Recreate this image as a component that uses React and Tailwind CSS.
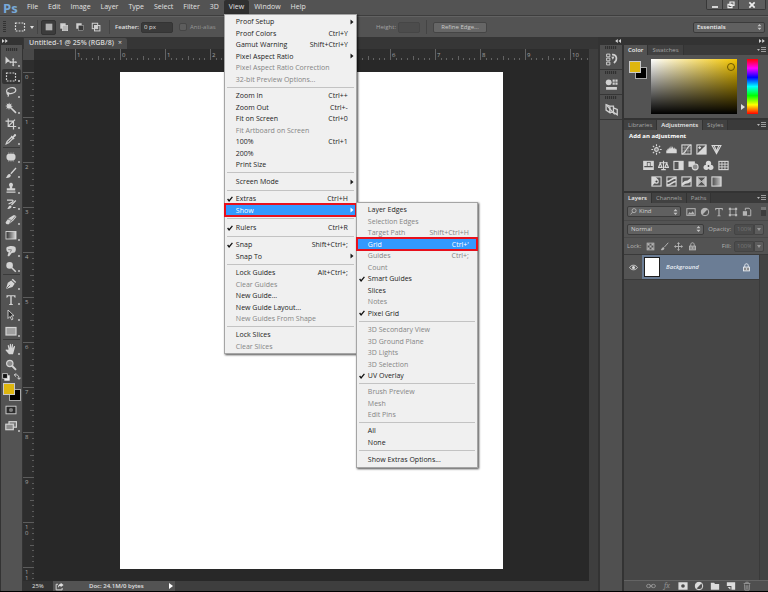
import React from "react";

/* ---------- drawing helpers ---------- */

function Icon({ size = 12, className = "", children }) {
  return (
    <svg
      width={size}
      height={size}
      viewBox="0 0 12 12"
      fill="none"
      stroke="currentColor"
      strokeWidth="1.2"
      aria-hidden="true"
      className={`shrink-0 ${className}`}
    >
      {children}
    </svg>
  );
}

const F = { fill: "currentColor", stroke: "none" };

const icons = {
  move: (
    <>
      <path {...F} d="M0.5 1.5v7.5l2-2 3-0.6z" />
      <path d="M8.2 4v6.4M5 7.2h6.4" />
      <path {...F} d="M8.2 3l1.3 1.6H6.9zM8.2 11.4l1.3-1.6H6.9zM4.2 7.2l1.4-1.2v2.4zM12 7.2l-1.4-1.2v2.4z" />
    </>
  ),
  marquee: <rect x="1.5" y="2" width="9" height="8" strokeDasharray="1.8 1.2" />,
  lasso: (
    <>
      <ellipse cx="6.2" cy="4.6" rx="4.6" ry="2.9" transform="rotate(-12 6.2 4.6)" />
      <path d="M2.6 6.6c-1 .8-.2 2 .8 1.600c1-.4.600-1.400-.200-1.500M3.200 8.400c.4.8.2 1.700-.4 2.300" />
    </>
  ),
  wand: (
    <>
      <path d="M5.500 5.500l5.500 5.300" strokeWidth="1.700" />
      <path {...F} d="M4.200 0.400l.6 2 1.900-.9-.8 1.900 2 .8-2 .7.7 1.900-1.800-.8-.8 1.900-.7-2-2 .8.900-1.900-1.900-.8 2-.700-.8-1.900 1.900.900z" />
    </>
  ),
  crop: <path d="M3.200 0.500v8h8M0.500 3.200h8v8.300M3.500 8.200l6.500-6.500" strokeWidth="1.200" />,
  dropper: (
    <>
      <path d="M1.200 10.800l1-2.400 4.300-4.200 1.400 1.400-4.300 4.200z" />
      <path {...F} d="M5.800 3.600l1-1 .9.800 1.500-2c1.100-1.100 2.700.5 1.600 1.600l-2 1.500.8.9-1 1z" />
    </>
  ),
  patch: (
    <>
      <rect {...F} x="1.500" y="2.800" width="9" height="6.600" rx="2.800" />
      <path d="M3.500 1.300v9.500M5.200 1.300v9.500M6.900 1.300v9.500M8.600 1.300v9.500" strokeWidth=".6" opacity=".6" />
    </>
  ),
  brush: (
    <>
      <path d="M11 1L5.800 6.800" strokeWidth="1.300" />
      <path {...F} d="M0.600 10.800c1.500-.2 1.400-3.300 3.600-3.700 1.300-.1 2 1.100 1.400 2.200-.8 1.500-3.200 1.900-5 1.500z" />
    </>
  ),
  stamp: <path {...F} d="M6 .8a2 2 0 0 1 1.600 3.200c-.5.800-.5 1.500-.4 2.300h3v2.300H1.800V6.300h3c.1-.8.1-1.500-.4-2.300A2 2 0 0 1 6 .8zM1.500 9.600h9v1.100h-9z" />,
  history: (
    <>
      <path d="M10.800 2.500L6.500 7" strokeWidth="1.200" />
      <path {...F} d="M2 10.800c1.300-.2 1.200-2.600 3-3.200 1.300-.1 2 1 1.300 2-.8 1.200-2.700 1.500-4.300 1.200z" />
      <path d="M2 2.200h5.200c1.400 0 .8 1.700-.3 2.200L3.500 6M8 9.500h2.500" />
    </>
  ),
  eraser: (
    <>
      <path {...F} d="M5.200 3.200L8 1.500c1-.5 3.700.2 3.300 1.500L8.600 6.200 4.600 9.800C3 11 .2 10 .7 8.300L3 5z" />
      <path d="M3 5.200l3.400 1.200 1-.5 3-3.700M6.400 6.400L4.300 9.800" stroke="#666" strokeWidth=".7" />
    </>
  ),
  gradient: (
    <>
      <defs>
        <linearGradient id="toolGradient">
          <stop offset="0" stopColor="#2c2c2c" />
          <stop offset="1" stopColor="#dcdcdc" />
        </linearGradient>
      </defs>
      <rect x="1" y="2.500" width="10" height="7.500" fill="url(#toolGradient)" strokeWidth=".9" />
    </>
  ),
  smudge: (
    <>
      <path {...F} d="M1.500 2.500C3.500.8 8 .5 10.300 2c1 2 .5 4.500-.8 5.600L6.800 8l-2.600 3.200c-1 .4-1.800-.2-1.500-1.200l1-2.800C1.800 7 1 5 1.500 2.500z" />
      <path d="M3.200 4.600l3.300.2-1.200 2.600" stroke="#666" strokeWidth=".7" />
    </>
  ),
  dodge: (
    <>
      <circle {...F} cx="4.600" cy="4.400" r="3.300" />
      <path d="M6.800 6.800l4 4" strokeWidth="1.500" />
    </>
  ),
  pen: (
    <>
      <path {...F} d="M7.800 .8l3.400 3.200-1 1-3.500-3.200zM6.200 2.400l3.500 3.300-2.300 3.400L1 11l1.800-6.300z" />
      <path d="M1.500 10.500l3.600-3.600" stroke="#535353" strokeWidth=".8" />
    </>
  ),
  type: <path {...F} d="M1.500 1.200h9v2.600h-.8c-.2-1-.7-1.500-1.600-1.500H6.700v6.900c0 .8.300 1 1.300 1v.8H4v-.8c1 0 1.300-.2 1.300-1V2.300H3.900c-.9 0-1.400.5-1.600 1.500h-.8z" />,
  select: <path d="M3 1v8.500l2-2 1.600 3.300 1.400-.7-1.600-3.200 2.600-.2z" fill="#2d2d2d" strokeWidth=".9" />,
  shape: <rect x="1" y="2.500" width="10" height="7.500" fill="#a0a0a0" />,
  hand: <path {...F} d="M3.600 6.500L2.700 2.800c0-.9.900-1 1.200-.2l.9 2.700V1.500c.1-.9 1.100-.9 1.200 0l.2 3.600.7-3.500c.3-.8 1.200-.6 1.100.2l-.3 3.700 1.200-2.200c.6-.7 1.400-.2 1.100.6L8.800 8.400 8 11.300H4L.7 7.600c-.4-.8.4-1.400 1.200-.9z" />,
  zoom: (
    <>
      <circle cx="4.800" cy="4.500" r="3.200" fill="#8c8c8c" strokeWidth="1.200" />
      <path d="M7.200 7l3.800 3.900" strokeWidth="1.900" />
    </>
  ),
  quickMask: (
    <>
      <rect x="1" y="2.200" width="10" height="7.600" fill="#2b2b2b" strokeWidth=".9" />
      <circle cx="6" cy="6" r="2.100" fill="#808080" stroke="none" />
    </>
  ),
  screenMode: (
    <>
      <rect x="4" y="1.700" width="7.500" height="5.500" fill="#777" />
      <rect x=".8" y="4.200" width="7.500" height="5.500" fill="#8d8d8d" />
    </>
  ),
  selNew: <rect {...F} x="2" y="2" width="8" height="8" opacity=".8" />,
  selAdd: (
    <>
      <rect {...F} x="1.500" y="1.500" width="6.500" height="6.500" />
      <rect x="4" y="4" width="6.500" height="6.500" fill="#b5b5b5" stroke="#e0e0e0" strokeWidth=".6" />
    </>
  ),
  selSub: (
    <>
      <path {...F} d="M1.500 1.500H8V4H4v4H1.500z" />
      <rect x="4.300" y="4.300" width="6.200" height="6.200" fill="#3a3a3a" strokeWidth=".5" />
    </>
  ),
  selInt: (
    <>
      <rect x="1.500" y="1.500" width="6.500" height="6.500" />
      <rect x="4.200" y="4.200" width="6.500" height="6.500" />
      <rect {...F} x="4.500" y="4.500" width="3.500" height="3.500" />
    </>
  ),
  histPanel: (
    <>
      <path d="M1.500 1h3v2.500h-3zM1.500 4.700h3v2.500h-3zM1.500 8.400h3V11h-3z" strokeWidth=".9" />
      <path d="M6.500 1.500c4.500-.5 5.500 5 1.700 7.700" strokeWidth="1.500" />
      <path {...F} d="M5.800 3.500l3-.3-1.600 3z" />
    </>
  ),
  props: (
    <>
      <circle {...F} cx="3.400" cy="4" r="2.700" />
      <path {...F} d="M7 1.400h2v2H7zM9.600 1.400h2v2h-2zM7 4.200h2v2H7zM9.600 4.200h2v2h-2zM1 8.300h10v2.500H1z" />
    </>
  ),
  brushes: (
    <>
      <path d="M1 1.500l3.500 1.400v6L1 6.500zM4.500 2.900h3.300v5.800H4.500M7.800 4.500l3.500 1.400v5L7.800 8.700z" />
      <path d="M2 2.500l7 8" />
    </>
  ),
  sun: (
    <>
      <circle cx="6" cy="6" r="2" fill="#7c7c7c" />
      <path d="M6 .4v2M6 9.600v2M.4 6h2M9.600 6h2M2 2l1.500 1.500M8.500 8.500L10 10M10 2L8.500 3.500M3.500 8.500L2 10" />
    </>
  ),
  levels: <path {...F} d="M.3 10V6.500l1 1V5l1 1.500V4l1 2V3l1.100 2.500L5.500 2l.8 3L7.400 2.500l.8 3L9.200 3.500l.6 2.500 1-1.500.9 2V10z" />,
  curves: (
    <>
      <rect x="1" y="1" width="10" height="10" />
      <path d="M1 4.300h10M1 7.600h10M4.300 1v10M7.600 1v10" strokeWidth=".4" />
      <path d="M1 11C6 10 6 2 11 1" />
    </>
  ),
  exposure: (
    <>
      <rect x="1" y="1" width="10" height="10" />
      <path {...F} d="M1 11L11 1v10z" />
      <path d="M2.500 4h3M4 2.500v3" />
    </>
  ),
  vibrance: <path d="M1.200 1.700h9.600L6 10.500zM3.500 2l2.500 6 2.500-6" />,
  hueSat: (
    <>
      <rect x=".8" y="1.500" width="10.400" height="8.800" />
      <path {...F} d="M1 1.500h3.200v5H1zM5 3h2.500v3.500H5zM8.300 1.500H11v5H8.300zM1 8h10v2.300H1z" />
    </>
  ),
  balance: (
    <>
      <path d="M6 .8v9M1.500 3L10.500 3M3.500 10.500h5" />
      <path d="M.6 8L2.500 3.500 4.400 8zM7.600 8l1.900-4.500L11.400 8z" />
    </>
  ),
  bw: (
    <>
      <rect x="1" y="1.500" width="10" height="9" />
      <path {...F} d="M6 1.500h5v9H6z" />
    </>
  ),
  photoFilter: (
    <>
      <path {...F} d="M.5 1.500h7v6h-7z" />
      <circle cx="7.800" cy="7.600" r="3.200" fill="#8d8d8d" />
    </>
  ),
  mixer: (
    <>
      <circle {...F} cx="6" cy="3.800" r="2.900" />
      <circle {...F} cx="3.500" cy="8" r="2.900" />
      <circle {...F} cx="8.500" cy="8" r="2.900" />
      <circle cx="6" cy="6.500" r="1" fill="#444" stroke="none" />
    </>
  ),
  lookup: (
    <>
      <rect x="1" y="1.500" width="10" height="9" />
      <path d="M1 4.500h10M1 7.500h10M4.300 1.500v9M7.600 1.500v9" strokeWidth="1" />
    </>
  ),
  invert: (
    <>
      <rect x="1" y="1" width="10" height="10" />
      <path {...F} d="M1 11V1h4L8 4v4H4z" />
      <circle cx="6" cy="6" r="1.800" fill="#3e3e3e" />
    </>
  ),
  posterize: (
    <>
      <rect x="1" y="1" width="10" height="10" />
      <path d="M1 6C5 6 6 2 11 2M1 10C6 10 6 6 11 6" strokeWidth="1.800" />
    </>
  ),
  threshold: (
    <>
      <rect x="1" y="1" width="10" height="10" />
      <path {...F} d="M1 8l3-2.500L7 5l4-3v4L8 8l-3 .5L1 11z" />
    </>
  ),
  selective: (
    <>
      <rect x="1" y="1" width="10" height="10" />
      <path {...F} d="M1 1l4.500 5L1 11zM11 1L6.500 6 11 11z" opacity=".8" />
      <path d="M1 1l10 10M11 1L1 11" strokeWidth=".6" />
    </>
  ),
  gradMap: (
    <>
      <defs>
        <linearGradient id="mapGradient">
          <stop offset="0" stopColor="#4a4a4a" />
          <stop offset="1" stopColor="#c8c8c8" />
        </linearGradient>
      </defs>
      <rect x="1" y="1" width="10" height="10" fill="url(#mapGradient)" />
    </>
  ),
  image: (
    <>
      <rect x="1" y="2" width="10" height="8" />
      <path {...F} d="M2 9l2.500-3L6 7.500 8 5l2.500 4z" />
    </>
  ),
  halfCircle: (
    <>
      <circle cx="6" cy="6" r="4.500" />
      <path {...F} d="M9.200 2.800A4.500 4.500 0 1 0 2.800 9.200z" />
    </>
  ),
  frame: (
    <>
      <rect x="2.500" y="2.500" width="7" height="7" />
      <path {...F} d="M1 1h2.600v2.600H1zM8.400 1H11v2.600H8.400zM1 8.400h2.600V11H1zM8.400 8.400H11V11H8.400z" />
    </>
  ),
  smart: (
    <>
      <path d="M4 4V1.500h4.500l2 2v7H6.500" />
      <rect {...F} x="1" y="5" width="5" height="5.500" />
    </>
  ),
  checker: (
    <>
      <rect x="1.500" y="1.500" width="9" height="9" />
      <path {...F} d="M2 2h2.700v2.700H2zM7.300 2H10v2.700H7.300zM4.700 4.700h2.600v2.600H4.700zM2 7.300h2.700V10H2zM7.300 7.300H10V10H7.300z" />
    </>
  ),
  moveAll: (
    <>
      <path d="M6 2v8M2 6h8" />
      <path {...F} d="M6 0l2 2.500H4zM6 12l2-2.500H4zM0 6l2.500-2v4zM12 6L9.500 4v4z" />
    </>
  ),
  lock: (
    <>
      <rect x="2" y="5.500" width="8" height="5" fill="#8d8d8d" />
      <path d="M3.700 5.500V3.300c0-3 4.600-3 4.600 0v2.200" strokeWidth="1.300" />
      <path d="M6 7v2" />
    </>
  ),
  eye: (
    <>
      <path d="M.8 6C3 2 9 2 11.200 6 9 10 3 10 .8 6z" strokeWidth="1.200" />
      <circle {...F} cx="6" cy="6" r="2" />
    </>
  ),
  link: (
    <>
      <ellipse cx="3.200" cy="6" rx="2.500" ry="2" />
      <ellipse cx="8.800" cy="6" rx="2.500" ry="2" />
      <path d="M4 6h4" />
    </>
  ),
  mask: (
    <>
      <rect {...F} x=".5" y="1.500" width="11" height="9" />
      <circle cx="6" cy="6" r="2.200" fill="#4a4a4a" stroke="none" />
    </>
  ),
  folder: <path {...F} d="M1 2h4l1 1.500h5V10.500H1z" />,
  newLayer: (
    <>
      <path {...F} d="M1 1.500h10v9H6.500V6H1z" />
      <path {...F} d="M2 7.200h3.300v3.300z" />
    </>
  ),
  trash: <path d="M2 3h8M4.500 3V1.500h3V3M3 4l.4 7h5.200L9 4M5 5v5M7 5v5" />,
  share: (
    <>
      <path d="M4 3H1.500v7.500h8V8" />
      <path {...F} d="M7.500 1l4 3-4 3V5.200C5.500 5.200 4.500 6 4 8c-.3-3 1-5 3.500-5.200z" />
    </>
  ),
};

function Grip() {
  return (
    <span className="block h-[3px] w-3 bg-[repeating-linear-gradient(90deg,#303030_0_1px,#4a4a4a_1px_2px)]" />
  );
}

/* ---------- menus ---------- */

const viewMenu = [
  [
    ["Proof Setup", { sub: true }],
    ["Proof Colors", { keys: "Ctrl+Y" }],
    ["Gamut Warning", { keys: "Shift+Ctrl+Y" }],
    ["Pixel Aspect Ratio", { sub: true }],
    ["Pixel Aspect Ratio Correction", { off: true }],
    ["32-bit Preview Options...", { off: true }],
  ],
  [
    ["Zoom In", { keys: "Ctrl++" }],
    ["Zoom Out", { keys: "Ctrl+-" }],
    ["Fit on Screen", { keys: "Ctrl+0" }],
    ["Fit Artboard on Screen", { off: true }],
    ["100%", { keys: "Ctrl+1" }],
    ["200%", {}],
    ["Print Size", {}],
  ],
  [["Screen Mode", { sub: true }]],
  [
    ["Extras", { keys: "Ctrl+H", checked: true }],
    ["Show", { sub: true, active: true, open: true }],
  ],
  [["Rulers", { keys: "Ctrl+R", checked: true }]],
  [
    ["Snap", { keys: "Shift+Ctrl+;", checked: true }],
    ["Snap To", { sub: true }],
  ],
  [
    ["Lock Guides", { keys: "Alt+Ctrl+;" }],
    ["Clear Guides", { off: true }],
    ["New Guide...", {}],
    ["New Guide Layout...", {}],
    ["New Guides From Shape", { off: true }],
  ],
  [
    ["Lock Slices", {}],
    ["Clear Slices", { off: true }],
  ],
];

const showMenu = [
  [
    ["Layer Edges", {}],
    ["Selection Edges", { off: true }],
    ["Target Path", { keys: "Shift+Ctrl+H", off: true }],
    ["Grid", { keys: "Ctrl+'", active: true }],
    ["Guides", { keys: "Ctrl+;", off: true }],
    ["Count", { off: true }],
    ["Smart Guides", { checked: true }],
    ["Slices", {}],
    ["Notes", { off: true }],
    ["Pixel Grid", { checked: true }],
  ],
  [
    ["3D Secondary View", { off: true }],
    ["3D Ground Plane", { off: true }],
    ["3D Lights", { off: true }],
    ["3D Selection", { off: true }],
    ["UV Overlay", { checked: true }],
  ],
  [
    ["Brush Preview", { off: true }],
    ["Mesh", { off: true }],
    ["Edit Pins", { off: true }],
  ],
  [
    ["All", {}],
    ["None", {}],
  ],
  [["Show Extras Options...", {}]],
];

function MenuItem({ label, opts }) {
  const { keys, sub, off, checked, active, open } = opts;
  const tone = active
    ? "bg-[#3399ff] text-white outline-2 -outline-offset-1 outline-[#e8101c]"
    : off
      ? "text-[#858585]"
      : "text-[#1c1c1c]";
  return (
    <li className="relative h-[13px] not-only:odd:h-[11px] not-only:even:h-[12px]">
      <button type="button" disabled={off} className={`flex h-full w-full items-center pr-[8px] text-left ${tone}`}>
        <span className="flex w-[11px] shrink-0 justify-center">
          {checked && (
            <svg width="6" height="6" viewBox="0 0 6 6" fill="none" stroke="#111" strokeWidth="1.300" aria-hidden="true">
              <path d="M.6 3l1.500 1.900L5.400.9" />
            </svg>
          )}
        </span>
        <span className="grow">{label}</span>
        {keys && <span>{keys}</span>}
        {sub && (
          <svg width="4" height="6" viewBox="0 0 4 6" fill="currentColor" className="-mr-[6px]" aria-hidden="true">
            <path d="M.5.500L3.500 3 .5 5.500z" />
          </svg>
        )}
      </button>
      {open && <Menu groups={showMenu} className="-top-[2px] left-full w-[122px] pt-px" />}
    </li>
  );
}

function Menu({ groups, className }) {
  return (
    <div
      className={`absolute z-10 border border-[#a5a5a5] bg-[#f0f0f0] pb-px text-[7px] leading-[11px] whitespace-nowrap shadow-[1px_1px_2px_rgba(0,0,0,0.7)] ${className}`}
    >
      {groups.map((items, i) => (
        <React.Fragment key={i}>
          {i > 0 && <hr className="mx-[2px] my-[2px] h-px border-0 bg-[#c3c3c3]" />}
          <ul>
            {items.map(([label, opts]) => (
              <MenuItem key={label} label={label} opts={opts} />
            ))}
          </ul>
        </React.Fragment>
      ))}
    </div>
  );
}

function MenuBar() {
  const names = ["File", "Edit", "Image", "Layer", "Type", "Select", "Filter", "3D", "View", "Window", "Help"];
  return (
    <header className="flex h-4 shrink-0 items-stretch border-b border-[#3e3e3e]">
      <span className="w-[22px] pl-[3px] text-[13px] leading-4 font-bold text-[#78a9d8]">Ps</span>
      <nav className="flex grow items-stretch text-[7px] text-[#e2e2e2]">
        {names.map((name) => (
          <div key={name} className="relative flex">
            <button type="button" className={name === "View" ? "rounded-t-xs bg-[#303030] px-[5px]" : "px-[5px]"}>
              {name}
            </button>
            {name === "View" && <Menu groups={viewMenu} className="top-[14px] left-0 w-[133px] pt-px" />}
          </div>
        ))}
      </nav>
      <div className="mr-[2px] flex h-[10px] divide-x divide-[#383838] rounded-b-xs border border-t-0 border-[#383838] bg-[#5e5e5e] text-[#eee]">
        <button type="button" aria-label="Minimize" className="flex w-4 items-center justify-center">
          <Icon size={8}><path d="M1.500 9h9" strokeWidth="2.500" /></Icon>
        </button>
        <button type="button" aria-label="Restore" className="flex w-4 items-center justify-center">
          <Icon size={8}><path d="M4.500 1.500h6v5h-6zM1.500 5h6v5h-6z" strokeWidth="1.800" /></Icon>
        </button>
        <button type="button" aria-label="Close" className="flex w-[26px] items-center justify-center">
          <Icon size={8}><path d="M2 2l8 8M10 2l-8 8" strokeWidth="2.500" /></Icon>
        </button>
      </div>
    </header>
  );
}

function UpDown() {
  return (
    <svg width="5" height="7" viewBox="0 0 5 7" fill="#c4c4c4" className="pointer-events-none absolute top-1/2 right-[3px] -translate-y-1/2" aria-hidden="true">
      <path d="M.5 2.700L2.500.4l2 2.300zM.5 4.300l2 2.300 2-2.300z" />
    </svg>
  );
}

function Dropdown({ label, value, className = "", selectClass = "" }) {
  return (
    <div className={`relative ${className}`}>
      <select
        aria-label={label}
        defaultValue={value}
        className={`block h-[11px] w-full appearance-none rounded-xs border border-[#3b3b3b] bg-[#606060] text-[6px] leading-[9px] text-[#d2d2d2] ${selectClass}`}
      >
        <option>{value}</option>
      </select>
      <UpDown />
    </div>
  );
}

function OptionsBar() {
  return (
    <div className="flex h-[21px] shrink-0 items-center border-t border-[#626262] pr-[3px] text-[6px] text-[#e0e0e0]">
      <span className="mr-[8px] ml-[3px] h-3 w-[3px] bg-[repeating-linear-gradient(#333_0_1px,#535353_1px_2px)]" />
      <button type="button" aria-label="Rectangular marquee" className="flex items-center gap-1">
        <Icon size={12}>{icons.marquee}</Icon>
        <svg width="4" height="3" viewBox="0 0 4 3" fill="#ddd" aria-hidden="true"><path d="M0 0h4L2 3z" /></svg>
      </button>
      <span className="mx-[3px] h-3.5 w-px bg-[#444]" />
      <div className="flex text-[#cfcfcf]">
        {[["New", "selNew"], ["Add", "selAdd"], ["Subtract", "selSub"], ["Intersect", "selInt"]].map(([label, icon], i) => (
          <button
            key={icon}
            type="button"
            aria-label={`${label} selection`}
            className={`flex h-[15px] items-center justify-center ${i === 0 ? "w-[15px] rounded-xs border border-[#333] bg-[#3c3c3c]" : "w-4"}`}
          >
            <Icon size={10}>{icons[icon]}</Icon>
          </button>
        ))}
      </div>
      <span className="mx-[5px] h-3.5 w-px bg-[#444]" />
      <label htmlFor="feather" className="w-[26px] font-semibold">Feather:</label>
      <input id="feather" defaultValue="0 px" className="h-[11px] w-[32px] rounded-xs border border-[#343434] bg-[#3a3a3a] px-[2px]" />
      <input id="alias" type="checkbox" disabled className="ml-[6px] h-[8px] w-[8px] appearance-none rounded-xs border border-[#464646] bg-[#5d5d5d]" />
      <label htmlFor="alias" className="ml-[3px] w-[186px] text-[#979797]">Anti-alias</label>
      <label htmlFor="height" className="w-[22px] text-[#a3a3a3]">Height:</label>
      <input id="height" disabled className="h-[11px] w-[22px] rounded-xs border border-[#464646] bg-[#4c4c4c]" />
      <span className="mx-[6px] h-3.5 w-px bg-[#444]" />
      <button type="button" className="h-[11px] w-[54px] rounded-xs border border-[#454545] bg-[#666] text-[#c9c9c9]">
        Refine Edge...
      </button>
      <Dropdown label="Workspace" value="Essentials" className="ml-auto w-[72px]" selectClass="bg-[#6a6a6a] pl-[3px] font-semibold text-[#eee]" />
    </div>
  );
}

/* ---------- left toolbar ---------- */

const toolGroups = [
  ["move", "marquee", "lasso", "wand", "crop", "dropper"],
  ["patch", "brush", "stamp", "history", "eraser", "gradient", "smudge", "dodge"],
  ["pen", "type", "select", "shape"],
  ["hand", "zoom"],
];

function ColorPair({ className = "" }) {
  return (
    <div className={`grid h-[18px] w-[18px] grid-cols-[6px_6px_6px] grid-rows-[6px_6px_6px] ${className}`}>
      <button type="button" aria-label="Background color" className="col-span-2 col-start-2 row-span-2 row-start-2 border border-[#a8a8a8] bg-black" />
      <button type="button" aria-label="Foreground color" className="col-span-2 col-start-1 row-span-2 row-start-1 border border-[#c9c9c9] bg-[#deb60e]" />
    </div>
  );
}

function Chevrons({ left = false }) {
  return (
    <svg width="6" height="4" viewBox="0 0 6 4" fill="#d5d5d5" className={left ? "rotate-180" : ""} aria-hidden="true">
      <path d="M0 0l2.600 2L0 4zM3.200 0l2.600 2-2.600 2z" />
    </svg>
  );
}

function Toolbar() {
  return (
    <aside className="flex w-[23px] shrink-0 flex-col border-x border-[#333] bg-[#535353] text-[#d4d4d4]">
      <div className="flex h-[8px] items-center bg-[#333] pl-px"><Chevrons /></div>
      <div className="flex h-[8px] items-center justify-center"><Grip /></div>
      {toolGroups.map((group, i) => (
        <React.Fragment key={i}>
          {i > 0 && <hr className="mx-[2px] mb-px h-px border-0 bg-[#3a3a3a]" />}
          <div>
            {group.map((tool) => (
              <button
                key={tool}
                type="button"
                aria-label={tool}
                className={`mx-px flex h-4 w-[19px] items-center pl-[3px] nth-[3n+2]:h-[15px] ${tool === "marquee" ? "rounded-xs bg-[#343434]" : ""}`}
              >
                <Icon size={12}>{icons[tool]}</Icon>
                {tool !== "zoom" && <span className="mt-auto mb-[2px] ml-px h-[2px] w-[2px] bg-[#aaa]" />}
              </button>
            ))}
          </div>
        </React.Fragment>
      ))}
      <div className="flex h-[9px] items-center justify-between px-px">
        <Icon size={8}>
          <rect x="4" y="4" width="7" height="7" fill="#eee" />
          <rect x="1" y="1" width="7" height="7" fill="#111" />
        </Icon>
        <Icon size={8}><path d="M2 3c5-1 7 1 7 6M4.500.500L2 3l2.500 2.500M6.500 7L9 9.500 11.500 7" strokeWidth="1.500" /></Icon>
      </div>
      <ColorPair className="mt-[2px] ml-[2px]" />
      <div className="mt-px flex flex-col pl-[4px]">
        <button type="button" aria-label="Quick mask" className="flex h-4 items-center"><Icon size={12}>{icons.quickMask}</Icon></button>
        <button type="button" aria-label="Screen mode" className="flex h-4 items-center">
          <Icon size={12}>{icons.screenMode}</Icon>
          <span className="mt-auto mb-[2px] ml-px h-[2px] w-[2px] bg-[#aaa]" />
        </button>
      </div>
    </aside>
  );
}

/* ---------- document ---------- */

const UNIT = 45;

function rulerTicks(origin, from, to) {
  const ticks = [];
  for (let i = from * 8; i <= to * 8; i++) {
    const length = i % 8 === 0 ? 11 : i % 4 === 0 ? 4 : 2;
    ticks.push({ at: Math.round(origin + (i * UNIT) / 8) + 0.5, length });
  }
  return ticks;
}

function TopRuler() {
  return (
    <svg width="100%" height="11" className="block min-w-0 grow bg-[#2d2d2d]" aria-hidden="true">
      {rulerTicks(86, -1, 40).map((t) => (
        <path key={t.at} d={`M${t.at} 11v${-t.length}`} stroke="#636363" />
      ))}
      {Array.from({ length: 12 }, (_, i) => i - 1).map((n) => (
        <text key={n} x={88 + n * UNIT} y="8" fontSize="6" fill="#a5a5a5">{Math.abs(n)}</text>
      ))}
    </svg>
  );
}

function SideRuler() {
  return (
    <svg width="11" height="100%" className="block bg-[#2d2d2d]" aria-hidden="true">
      {rulerTicks(12, 0, 30).map((t) => (
        <path key={t.at} d={`M11 ${t.at}h${-t.length}`} stroke="#5c5c5c" />
      ))}
      {Array.from({ length: 12 }, (_, n) =>
        String(n).split("").map((digit, k) => (
          <text key={`${n}-${k}`} x="2" y={19 + n * UNIT + k * 6} fontSize="6" fill="#a5a5a5">{digit}</text>
        ))
      )}
    </svg>
  );
}

function DocumentArea() {
  return (
    <main className="flex min-w-0 grow flex-col bg-[#363636]">
      <div className="flex h-3 items-stretch">
        <div className="mt-px ml-px flex w-[103px] items-center justify-between rounded-tr-xs bg-[#4b4b4b] px-[5px] text-[7px] font-semibold text-[#d6d6d6]">
          <span className="whitespace-nowrap">Untitled-1 @ 25% (RGB/8)</span>
          <button type="button" aria-label="Close document" className="font-normal">×</button>
        </div>
      </div>
      <div className="flex min-h-0 grow">
        <div className="flex min-w-0 grow flex-col">
          <div className="flex h-[11px] shrink-0">
            <span className="w-[11px] shrink-0 bg-[#484848]" />
            <TopRuler />
          </div>
          <div className="flex min-h-0 grow">
            <div className="w-[11px] shrink-0 overflow-hidden"><SideRuler /></div>
            <div className="flex grow items-center justify-center overflow-hidden bg-[#282828]">
              <div className="h-[497px] w-[383px] shrink-0 bg-white" />
            </div>
          </div>
        </div>
        <div className="w-[9px] shrink-0 bg-[#3e3e3e]" />
      </div>
      <footer className="flex h-[10px] shrink-0 items-stretch bg-[#3e3e3e] text-[6px] text-[#e0e0e0]">
        <span className="flex w-[30px] items-center bg-[#333] pl-[9px]">25%</span>
        <div className="flex w-[122px] items-center bg-[#535353] px-[2px]">
          <Icon size={9}>{icons.share}</Icon>
          <span className="grow pl-[25px] font-semibold">Doc: 24.1M/0 bytes</span>
          <button type="button" aria-label="Status options">
            <svg width="4" height="6" viewBox="0 0 4 6" fill="#fff" aria-hidden="true"><path d="M0 0l4 3-4 3z" /></svg>
          </button>
        </div>
      </footer>
    </main>
  );
}

/* ---------- right side ---------- */

function IconDock() {
  return (
    <aside className="flex w-[26px] shrink-0 flex-col border-x-2 border-[#333] bg-[#505050] text-[#d0d0d0]">
      <div className="flex h-[8px] items-center justify-end bg-[#333] pr-px"><Chevrons left /></div>
      {["histPanel", "props", "brushes"].map((name) => (
        <div key={name} className="flex h-[25px] flex-col items-center border-b border-[#363636] pt-px">
          <Grip />
          <button type="button" aria-label={name} className="flex grow items-center"><Icon size={13}>{icons[name]}</Icon></button>
        </div>
      ))}
    </aside>
  );
}

function Tabs({ names, active }) {
  return (
    <div className="flex h-[10px] shrink-0 bg-[#3a3a3a] text-[6px]">
      {names.map((name) => (
        <button
          key={name}
          type="button"
          className={`border-r border-[#333] px-[4px] ${name === active ? "bg-[#535353] font-semibold text-[#ececec]" : "bg-[#414141] text-[#a5a5a5]"}`}
        >
          {name}
        </button>
      ))}
      <button type="button" aria-label="Panel menu" className="mr-[2px] ml-auto text-[#b5b5b5]">
        <svg width="9" height="6" viewBox="0 0 9 6" aria-hidden="true">
          <path d="M0 2h3L1.500 4z" fill="currentColor" />
          <path d="M4 .5h5M4 2.500h5M4 4.500h5" stroke="currentColor" strokeWidth=".8" />
        </svg>
      </button>
    </div>
  );
}

function ColorPanel() {
  return (
    <section>
      <Tabs names={["Color", "Swatches"]} active="Color" />
      <div className="flex h-[63px] pt-[4px]">
        <ColorPair className="mt-[2px] mr-[4px] ml-[5px]" />
        <div className="relative h-[55px] grow bg-[linear-gradient(to_bottom,transparent,#000),linear-gradient(to_right,#fff,#f3c500)]">
          <span className="absolute top-[4px] right-[2px] h-[8px] w-[8px] rounded-full border border-[#6b5600]" />
        </div>
        <svg width="5" height="6" viewBox="0 0 5 6" fill="#ddd" className="mt-[45px] mr-px ml-[4px]" aria-hidden="true"><path d="M0 0l4 3-4 3z" /></svg>
        <div className="mr-[10px] h-[55px] w-[11px] bg-[linear-gradient(#f00,#f0f,#00f,#0ff,#0f0,#ff0,#f00)]" />
      </div>
    </section>
  );
}

const adjustmentRows = [
  ["sun", "levels", "curves", "exposure", "vibrance"],
  ["hueSat", "balance", "bw", "photoFilter", "mixer", "lookup"],
  ["invert", "posterize", "threshold", "selective", "gradMap"],
];

function AdjustmentsPanel() {
  return (
    <section className="border-t-2 border-[#333] pb-[2px]">
      <Tabs names={["Libraries", "Adjustments", "Styles"]} active="Adjustments" />
      <h2 className="h-[11px] pl-[5px] text-[6px] leading-[12px] font-bold text-white">Add an adjustment</h2>
      <div className="flex flex-col pr-[20px] text-[#d8d8d8]">
        {adjustmentRows.map((row, i) => (
          <div key={i} className="flex h-4 items-center justify-center gap-[4px]">
            {row.map((name) => (
              <button key={name} type="button" aria-label={name}><Icon size={11}>{icons[name]}</Icon></button>
            ))}
          </div>
        ))}
      </div>
    </section>
  );
}

function Percent({ id, label }) {
  return (
    <>
      <label htmlFor={id} className="mr-[3px] ml-auto">{label}</label>
      <input id={id} disabled defaultValue="100%" className="h-[11px] w-[20px] rounded-l-xs border border-[#444] bg-[#4c4c4c] px-[2px] text-[#777]" />
      <button type="button" aria-label={`${label} slider`} className="mr-[4px] flex h-[11px] w-[10px] items-center justify-center rounded-r-xs border border-[#444] bg-[#5c5c5c]">
        <svg width="4" height="3" viewBox="0 0 4 3" fill="#999" aria-hidden="true"><path d="M0 0h4L2 3z" /></svg>
      </button>
    </>
  );
}

function LayersPanel() {
  return (
    <section className="flex min-h-0 grow flex-col border-t-2 border-[#333] text-[6px] text-[#b5b5b5]">
      <Tabs names={["Layers", "Channels", "Paths"]} active="Layers" />
      <div className="flex h-[18px] items-center gap-[4px] border-b border-[#484848] pr-[2px] pl-[3px]">
        <div className="relative mr-px flex w-[54px] items-center">
          <Icon size={7} className="pointer-events-none absolute left-[3px] z-1">
            <circle cx="7" cy="4.500" r="3.500" strokeWidth="1.500" /><path d="M4.500 7L1 11" strokeWidth="1.500" />
          </Icon>
          <Dropdown label="Layer filter" value="Kind" className="w-full" selectClass="pl-[11px]" />
        </div>
        {["image", "halfCircle", "type", "frame", "smart"].map((name) => (
          <button key={name} type="button" aria-label={`Filter ${name}`}><Icon size={10}>{icons[name]}</Icon></button>
        ))}
        <span className="ml-auto h-[9px] w-[5px] bg-[#3d3d3d] shadow-[inset_0_3px_#777]" />
      </div>
      <div className="flex h-[17px] items-center border-b border-[#484848] pl-[3px]">
        <Dropdown label="Blend mode" value="Normal" className="w-[77px]" selectClass="pl-[3px]" />
        <Percent id="opacity" label="Opacity:" />
      </div>
      <div className="flex h-[17px] items-center gap-[5px] border-b border-[#3a3a3a] pl-[3px]">
        <span>Lock:</span>
        {["checker", "brush", "moveAll", "lock"].map((name) => (
          <button key={name} type="button" aria-label={`Lock ${name}`}><Icon size={9}>{icons[name]}</Icon></button>
        ))}
        <div className="ml-auto flex items-center"><Percent id="fill" label="Fill:" /></div>
      </div>
      <div className="flex min-h-0 grow bg-[#464646]">
        <div className="min-w-0 grow">
          <div className="flex h-[25px] items-stretch border-b border-[#3a3a3a] bg-[#535353]">
            <button type="button" aria-label="Toggle visibility" className="flex w-[18px] items-center justify-center text-[#ddd]"><Icon size={9}>{icons.eye}</Icon></button>
            <div className="flex grow items-center bg-[#6b7d95] pr-[8px] pl-[2px] text-[#e8edf3]">
              <span className="h-[20px] w-4 border border-[#1e1e1e] bg-white" />
              <span className="ml-[6px] grow font-semibold italic">Background</span>
              <Icon size={9}>{icons.lock}</Icon>
            </div>
          </div>
        </div>
        <div className="w-[9px] shrink-0 border-l border-[#3a3a3a] bg-[#434343]" />
      </div>
      <div className="flex h-[11px] shrink-0 items-center justify-end gap-[6px] border-t border-[#646464] bg-[#4f4f4f] pr-4 text-[#dcdcdc]">
        <button type="button" aria-label="Link layers" className="text-[#909090]"><Icon size={10}>{icons.link}</Icon></button>
        <button type="button" className="w-[10px] font-serif text-[8px] leading-[10px] text-[#909090] italic">fx</button>
        {["mask", "halfCircle", "folder", "newLayer"].map((name) => (
          <button key={name} type="button" aria-label={name}><Icon size={10}>{icons[name]}</Icon></button>
        ))}
        <button type="button" aria-label="Delete layer" className="text-[#909090]"><Icon size={10}>{icons.trash}</Icon></button>
      </div>
    </section>
  );
}

export default function App() {
  return (
    <div className="flex h-screen flex-col overflow-hidden border-b border-black bg-[#535353] font-['Open_Sans','Noto_Sans',sans-serif]">
      <MenuBar />
      <OptionsBar />
      <div className="flex min-h-0 grow">
        <Toolbar />
        <DocumentArea />
        <IconDock />
        <aside className="flex w-36 shrink-0 flex-col bg-[#535353]">
          <div className="flex h-[8px] shrink-0 items-center justify-end bg-[#333] pr-[3px]"><Chevrons /></div>
          <ColorPanel />
          <AdjustmentsPanel />
          <LayersPanel />
        </aside>
      </div>
    </div>
  );
}
